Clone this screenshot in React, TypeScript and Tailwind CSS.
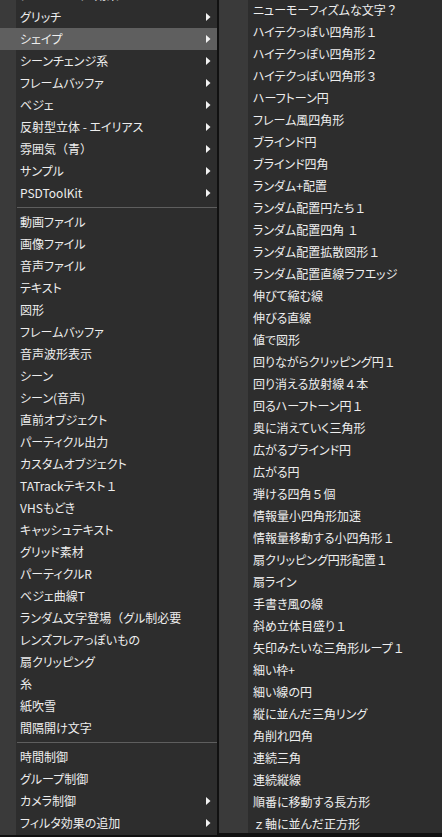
import React from "react";

type Item = { t: string; sub?: boolean; hl?: boolean } | "sep";

const leftItems: Item[] = [
  { t: "アニメーション効果", sub: true },
  { t: "グリッチ", sub: true },
  { t: "シェイプ", sub: true, hl: true },
  { t: "シーンチェンジ系", sub: true },
  { t: "フレームバッファ", sub: true },
  { t: "ベジェ", sub: true },
  { t: "反射型立体 - エイリアス", sub: true },
  { t: "雰囲気（青）", sub: true },
  { t: "サンプル", sub: true },
  { t: "PSDToolKit", sub: true },
  "sep",
  { t: "動画ファイル" },
  { t: "画像ファイル" },
  { t: "音声ファイル" },
  { t: "テキスト" },
  { t: "図形" },
  { t: "フレームバッファ" },
  { t: "音声波形表示" },
  { t: "シーン" },
  { t: "シーン(音声)" },
  { t: "直前オブジェクト" },
  { t: "パーティクル出力" },
  { t: "カスタムオブジェクト" },
  { t: "TATrackテキスト１" },
  { t: "VHSもどき" },
  { t: "キャッシュテキスト" },
  { t: "グリッド素材" },
  { t: "パーティクルR" },
  { t: "ベジェ曲線T" },
  { t: "ランダム文字登場（グル制必要" },
  { t: "レンズフレアっぽいもの" },
  { t: "扇クリッピング" },
  { t: "糸" },
  { t: "紙吹雪" },
  { t: "間隔開け文字" },
  "sep",
  { t: "時間制御" },
  { t: "グループ制御" },
  { t: "カメラ制御", sub: true },
  { t: "フィルタ効果の追加", sub: true },
];

const rightItems = [
  "ニューモーフィズムな文字？",
  "ハイテクっぽい四角形１",
  "ハイテクっぽい四角形２",
  "ハイテクっぽい四角形３",
  "ハーフトーン円",
  "フレーム風四角形",
  "ブラインド円",
  "ブラインド四角",
  "ランダム+配置",
  "ランダム配置円たち１",
  "ランダム配置四角 １",
  "ランダム配置拡散図形１",
  "ランダム配置直線ラフエッジ",
  "伸びて縮む線",
  "伸びる直線",
  "値で図形",
  "回りながらクリッピング円１",
  "回り消える放射線４本",
  "回るハーフトーン円１",
  "奥に消えていく三角形",
  "広がるブラインド円",
  "広がる円",
  "弾ける四角５個",
  "情報量小四角形加速",
  "情報量移動する小四角形１",
  "扇クリッピング円形配置１",
  "扇ライン",
  "手書き風の線",
  "斜め立体目盛り１",
  "矢印みたいな三角形ループ１",
  "細い枠+",
  "細い線の円",
  "縦に並んだ三角リング",
  "角削れ四角",
  "連続三角",
  "連続縦線",
  "順番に移動する長方形",
  "ｚ軸に並んだ正方形",
];

const FW = /[０-９？（）ｚ]/;

function Label({ t }: { t: string }) {
  const parts: React.ReactNode[] = [];
  let buf = "";
  [...t].forEach((c, i) => {
    if (FW.test(c)) {
      if (buf) parts.push(buf);
      buf = "";
      parts.push(
        <span key={i} className="[font-feature-settings:normal]">
          {c}
        </span>
      );
    } else buf += c;
  });
  if (buf) parts.push(buf);
  return <span className="flex-1 whitespace-nowrap">{parts}</span>;
}

const Arrow = () => (
  <svg width="5" height="8" viewBox="0 0 5 8" className="shrink-0">
    <polygon points="0,0 4.5,4 0,8" fill="#f2f2f2" />
  </svg>
);

export default function App() {
  return (
    <div
      className="w-[442px] h-[837px] overflow-hidden bg-[#111111] flex text-[12px] leading-[16px] text-[#eeeeee] [font-feature-settings:'palt']"
      style={{ fontFamily: '"Noto Sans CJK JP", "Noto Sans", sans-serif' }}
    >
      <div className="w-[217px] h-[835px] overflow-hidden shrink-0 bg-[linear-gradient(to_right,#3a3a3a_16px,#2d2d2d_16px)]">
        <div className="flex flex-col -mt-[16px]">
          {leftItems.map((it, i) =>
            it === "sep" ? (
              <div key={i} className="h-[7px] flex items-center pl-[17px]">
                <div className="h-px w-full bg-[#5e5e5e]" />
              </div>
            ) : (
              <div
                key={i}
                className={`h-[22px] flex items-center pl-[20px] pr-[6px] ${it.hl ? "bg-[#5f5f5f]" : ""}`}
              >
                <Label t={it.t} />
                {it.sub && <Arrow />}
              </div>
            )
          )}
        </div>
      </div>
      <div className="w-[2px] shrink-0" />
      <div className="flex-1 h-[833px] overflow-hidden bg-[linear-gradient(to_right,#3a3a3a_29px,#2d2d2d_29px)]">
        <div className="flex flex-col -mt-[1px]">
          {rightItems.map((t, i) => (
            <div key={i} className="h-[22px] flex items-center pl-[34px]">
              <Label t={t} />
            </div>
          ))}
        </div>
      </div>
    </div>
  );
}
